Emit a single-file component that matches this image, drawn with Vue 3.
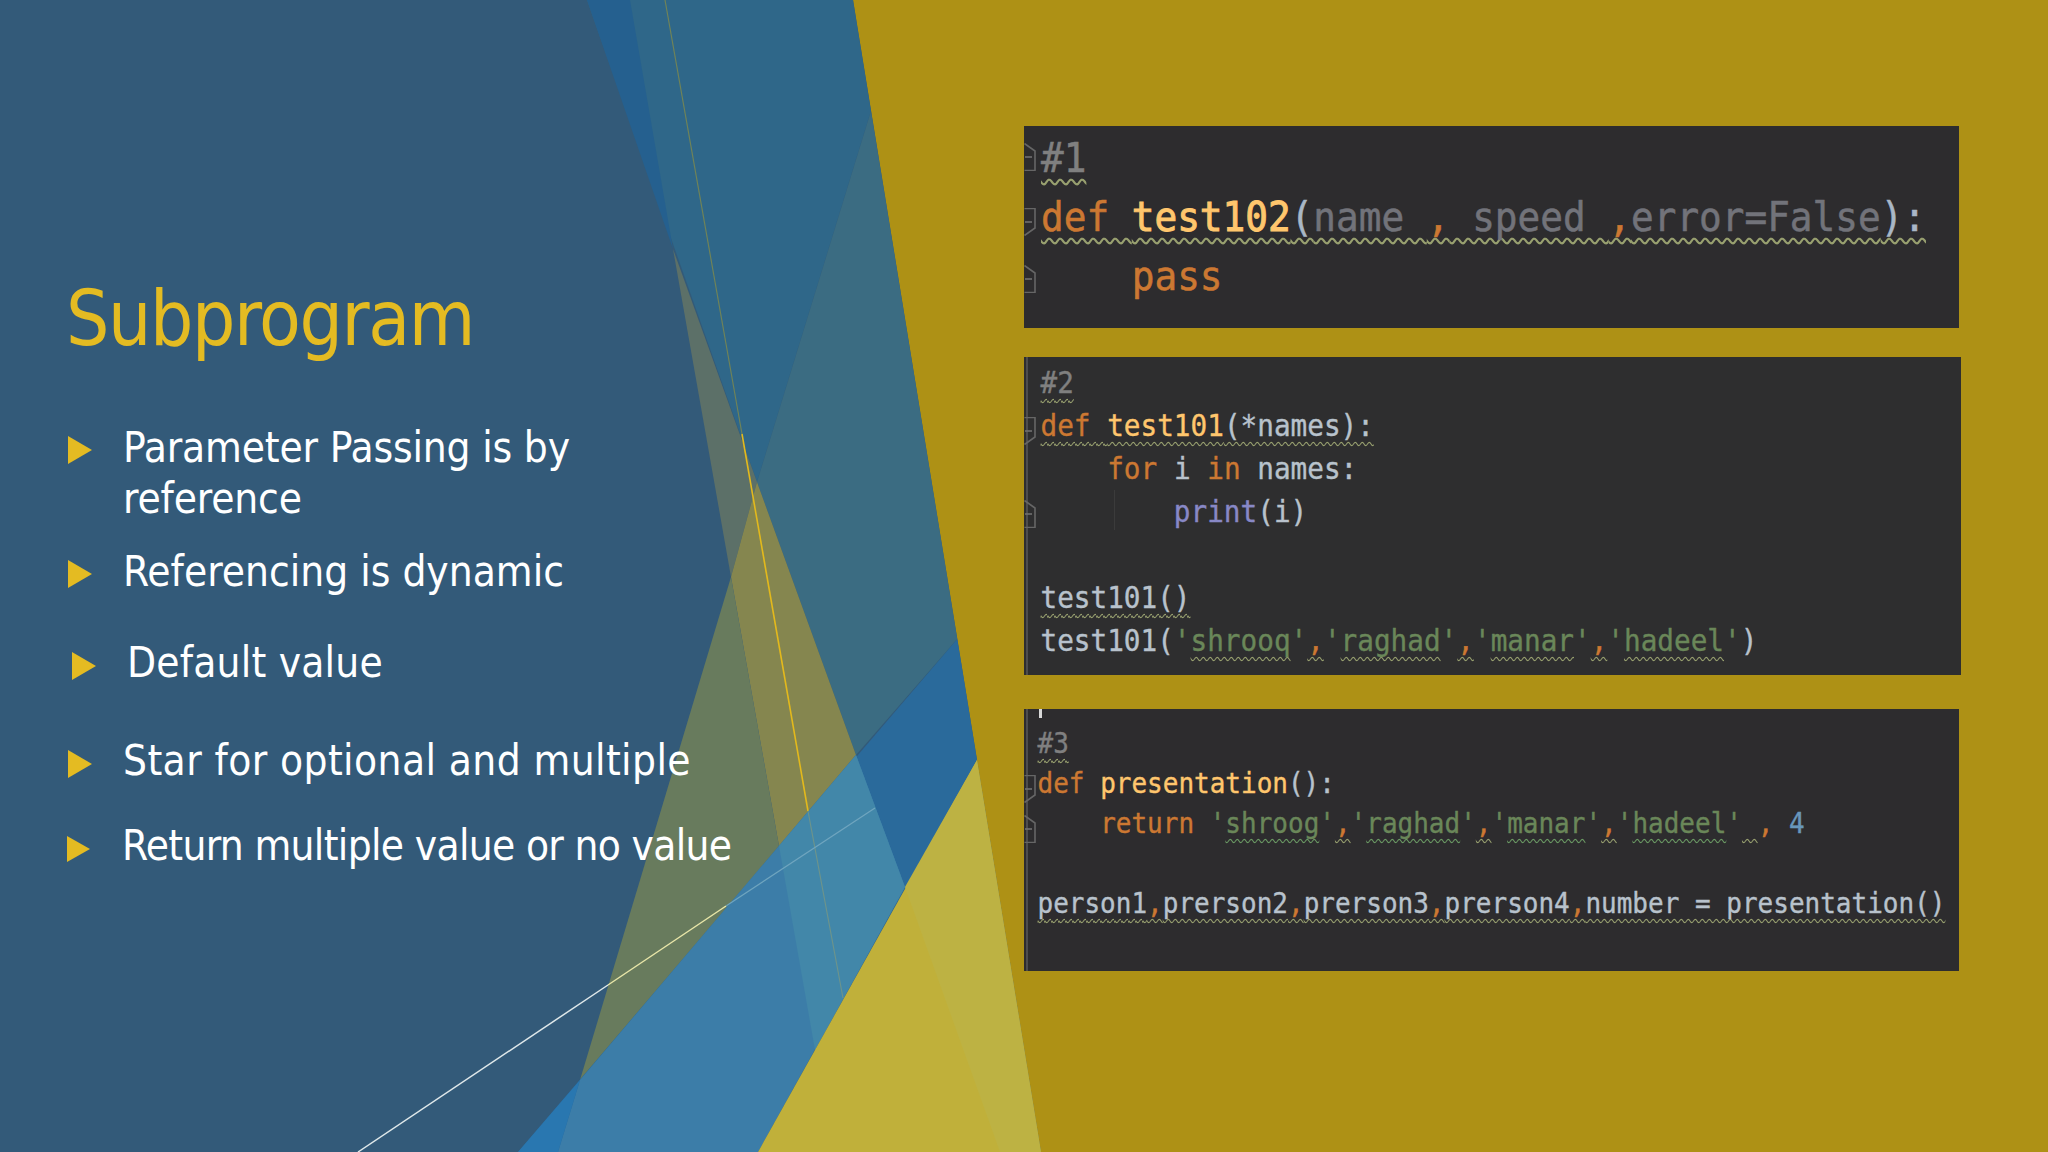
<script setup>
const bullets = [
  { lines: ['Parameter Passing is by', 'reference'], cls: 'b1' },
  { lines: ['Referencing is dynamic'], cls: 'b2' },
  { lines: ['Default value'], cls: 'b3' },
  { lines: ['Star for optional and multiple'], cls: 'b4' },
  { lines: ['Return multiple value or no value'], cls: 'b5' }
]

const shapes = [
  ['587,0 853,0 871,111 757,482', '#2f6789'],
  ['587,0 630,0 673,249', '#25608f'],
  ['871,111 957.3,639 856,755 757,482', '#3b6c82'],
  ['673,249 757,482 731,577', '#5c7068'],
  ['757,482 856,755 779,846 731,577', '#85864f'],
  ['731,577 779,846 580,1080', '#687b5d'],
  ['518,1152 957.3,639 977,760 758,1152', '#2a6a9b'],
  ['856,755 905,887 758,1152 558,1152 580,1080', '#3c7da8'],
  ['779,846 856,755 905,887 815,1050', '#4287a9'],
  ['518,1152 580,1080 558,1152', '#2977b0'],
  ['977,760 1041,1152 758,1152', '#c0b03a'],
  ['905,887 977,760 1041,1152 1000,1152', '#bdb243']
]

const t = (text, c = '', w = false) => ({ text, c, w })

const panels = [
  {
    cls: 'p1',
    markers: [
      { top: 17, dir: 'up' },
      { top: 82, dir: 'down' },
      { top: 139, dir: 'up' }
    ],
    lines: [
      { wave: true, toks: [t('#1', 'gr')] },
      { wave: true, toks: [t('def ', 'kw'), t('test102', 'fn'), t('(', 'pl'), t('name ', 'dim'), t(',', 'kw'), t(' speed ', 'dim'), t(',', 'kw'), t('error=False', 'dim'), t('):', 'pl')] },
      { toks: [t('    '), t('pass', 'kw')] }
    ]
  },
  {
    cls: 'p2',
    markers: [
      { top: 60, dir: 'down' },
      { top: 143, dir: 'up' }
    ],
    lines: [
      { wave: true, toks: [t('#2', 'gr')] },
      { wave: true, toks: [t('def ', 'kw'), t('test101', 'fn'), t('(*names):', 'pl')] },
      { toks: [t('    '), t('for ', 'kw'), t('i ', 'pl'), t('in ', 'kw'), t('names:', 'pl')] },
      { toks: [t('        '), t('print', 'bi'), t('(i)', 'pl')] },
      { toks: [t(' ')] },
      { wave: true, toks: [t('test101()', 'pl')] },
      { toks: [t('test101(', 'pl'), t("'", 'st'), t('shrooq', 'st', true), t("'", 'st'), t(',', 'kw', true), t("'", 'st'), t('raghad', 'st', true), t("'", 'st'), t(',', 'kw', true), t("'", 'st'), t('manar', 'st', true), t("'", 'st'), t(',', 'kw', true), t("'", 'st'), t('hadeel', 'st', true), t("'", 'st'), t(')', 'pl')] }
    ]
  },
  {
    cls: 'p3',
    markers: [
      { top: 66, dir: 'down' },
      { top: 106, dir: 'up' }
    ],
    lines: [
      { wave: true, toks: [t('#3', 'gr')] },
      { toks: [t('def ', 'kw'), t('presentation', 'fn'), t('():', 'pl')] },
      { toks: [t('    '), t('return ', 'kw'), t("'", 'st'), t('shroog', 'st', true), t("'", 'st'), t(',', 'kw', true), t("'", 'st'), t('raghad', 'st', true), t("'", 'st'), t(',', 'kw', true), t("'", 'st'), t('manar', 'st', true), t("'", 'st'), t(',', 'kw', true), t("'", 'st'), t('hadeel', 'st', true), t("'", 'st'), t(' ', 'pl', true), t(',', 'kw'), t(' '), t('4', 'nu')] },
      { toks: [t(' ')] },
      { wave: true, toks: [t('person1', 'pl'), t(',', 'kw'), t('prerson2', 'pl'), t(',', 'kw'), t('prerson3', 'pl'), t(',', 'kw'), t('prerson4', 'pl'), t(',', 'kw'), t('number = presentation()', 'pl')] }
    ]
  }
]
</script>

<template>
  <div class="slide">
    <svg class="backdrop" viewBox="0 0 2048 1152" width="2048" height="1152" aria-hidden="true">
      <polygon points="0,0 853,0 1041,1152 0,1152" fill="#335a79" />
      <polygon v-for="(s, i) in shapes" :key="i" :points="s[0]" :fill="s[1]" />
      <line x1="665" y1="0" x2="742" y2="434" stroke="#8a8f45" stroke-width="1.2" opacity=".7" />
      <line x1="742" y1="434" x2="808" y2="811" stroke="#e3b91c" stroke-width="1.6" />
      <line x1="808" y1="811" x2="843" y2="998" stroke="#7f9a80" stroke-width="1.2" opacity=".7" />
      <line x1="358" y1="1152" x2="608" y2="985" stroke="#dfe8ea" stroke-width="1.5" />
      <line x1="608" y1="985" x2="726" y2="906" stroke="#e8e6a8" stroke-width="1.5" />
      <line x1="726" y1="906" x2="875" y2="808" stroke="#6fa5bf" stroke-width="1.3" />
    </svg>

    <div class="layout">
      <section class="left">
        <h1 class="title">Subprogram</h1>
        <ul class="list">
          <li v-for="b in bullets" :key="b.lines[0]" class="item" :class="b.cls">
            <span class="tri"></span>
            <span class="txt"><span v-for="l in b.lines" :key="l" class="ln">{{ l }}</span></span>
          </li>
        </ul>
      </section>

      <section class="right">
        <div v-for="p in panels" :key="p.cls" class="panel" :class="p.cls">
          <span class="guide"></span>
          <span class="indent"></span>
          <span class="cursor"></span>
          <svg v-for="(m, i) in p.markers" :key="i" class="mark" :style="{ top: m.top + 'px' }" viewBox="0 0 12 28" width="12" height="28">
            <path :d="m.dir === 'up' ? 'M.5 27.5H11V8L.5 .5' : 'M.5 .5H11V20L.5 27.5'" fill="none" stroke="#666" stroke-width="1.6" />
            <path d="M1 14H8" stroke="#707070" stroke-width="1.6" />
          </svg>
          <div v-for="(ln, i) in p.lines" :key="i" class="code" :class="{ wave: ln.wave }"><span v-for="(k, j) in ln.toks" :key="j" :class="[k.c, { wave: k.w }]">{{ k.text }}</span></div>
        </div>
      </section>
    </div>
  </div>
</template>

<style>
html, body { margin: 0; background: #ae9115; }
</style>

<style scoped>
.slide {
  position: relative;
  width: 2048px;
  height: 1152px;
  overflow: hidden;
  background: #ae9115;
}
.backdrop {
  position: absolute;
  inset: 0;
}
.layout {
  position: relative;
  display: grid;
  grid-template-columns: 1024px 1fr;
  height: 100%;
}
.left {
  padding: 274px 0 0 66px;
  font-family: "DejaVu Sans", sans-serif;
  font-stretch: condensed;
}
.title {
  margin: 0 0 58px;
  font-size: 76px;
  line-height: 90px;
  letter-spacing: -1.4px;
  font-weight: 400;
  color: #e4bb22;
}
.list {
  list-style: none;
  margin: 0;
  padding: 0;
}
.item {
  display: flex;
  gap: 31px;
  padding-left: 2px;
  color: #fff;
  font-size: 42px;
  line-height: 51px;
  white-space: nowrap;
}
.ln { display: block; }
.tri {
  flex: none;
  width: 0;
  height: 0;
  margin-top: 14px;
  border-left: 24px solid #e4bb22;
  border-top: 14px solid transparent;
  border-bottom: 14px solid transparent;
}
.b1 { letter-spacing: -.17px; }
.b2 { margin-top: 22px; }
.b3 { margin-top: 40px; padding-left: 6px; letter-spacing: .2px; }
.b3 .tri { margin-top: 15px; }
.b4 { margin-top: 47px; letter-spacing: .4px; }
.b4 .tri { margin-top: 15px; }
.b5 { margin-top: 34px; padding-left: 1px; gap: 32px; letter-spacing: -.67px; }
.b5 .tri { margin-top: 16px; border-left-width: 23px; border-top-width: 13px; border-bottom-width: 13px; }

.right {
  padding-top: 126px;
}
.panel {
  position: relative;
  box-sizing: border-box;
  width: 935px;
  background: #2d2c2e;
  font-family: "DejaVu Sans Mono", "Liberation Mono", monospace;
  overflow: hidden;
  -webkit-text-stroke: .35px;
}
.code {
  white-space: pre;
  transform: scaleY(1.07);
  transform-origin: 0 72%;
}
.wave {
  text-decoration: underline wavy #98a06f;
  text-decoration-thickness: 1.1px;
  text-underline-offset: 5px;
  text-decoration-skip-ink: none;
}
.p1 {
  height: 202px;
  padding: 4px 0 0 17px;
  font-size: 37.7px;
  line-height: 59px;
  -webkit-text-stroke: .5px;
}
.p1 .wave { text-decoration-thickness: 1.5px; text-underline-offset: 6px; }
.p2 {
  width: 937px;
  height: 318px;
  margin-top: 29px;
  padding: 5px 0 0 16.5px;
  font-size: 27.7px;
  line-height: 43px;
  background: #2e2e2f;
}
.p3 {
  height: 262px;
  margin-top: 34px;
  padding: 15px 0 0 13.5px;
  font-size: 26px;
  line-height: 40px;
}
.p3 .st.wave { text-decoration-color: #6a9a63; }
.gr { color: #808080; }
.kw { color: #cc7832; }
.fn { color: #ffc66d; }
.pl { color: #a9b7c6; }
.dim { color: #72737a; }
.bi { color: #8888c6; }
.st { color: #6a8759; }
.nu { color: #6897bb; }
.p1 .fn { -webkit-text-stroke: .9px; }
.p2 .pl, .p3 .pl { color: #b8c2cc; }

.mark {
  position: absolute;
  left: 0;
}
.guide, .indent, .cursor { display: none; position: absolute; }
.p2 .guide, .p3 .guide {
  display: block;
  left: 2px;
  top: 0;
  bottom: 0;
  width: 2px;
  background: #4d4d4d;
}
.p2 .indent {
  display: block;
  left: 90px;
  top: 133px;
  width: 1px;
  height: 40px;
  background: #3b3b3b;
}
.p3 .cursor {
  display: block;
  left: 15px;
  top: 0;
  width: 3px;
  height: 9px;
  background: #d8d8d8;
}
</style>
